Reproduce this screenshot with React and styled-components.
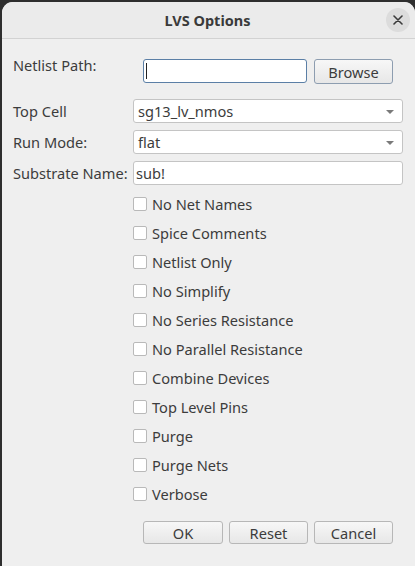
import React from "react";
import styled, { createGlobalStyle } from "styled-components";

const Global = createGlobalStyle`
  html, body {
    margin: 0;
    padding: 0;
    background: #2e2e2e;
  }
  body {
    font-family: "Noto Sans", "DejaVu Sans", sans-serif;
    font-size: 14.6px;
    color: #3c3c3c;
  }
  * { box-sizing: border-box; }
`;

const Window = styled.div`
  margin: 2px 0 0 2px;
  height: 564px;
  background: #efefef;
  border-radius: 11px 11px 0 0;
  overflow: hidden;
  display: flex;
  flex-direction: column;
`;

const TitleBar = styled.div`
  position: relative;
  height: 37px;
  flex: none;
  display: flex;
  align-items: center;
  justify-content: center;
  background: #ebebeb;
  border-bottom: 1px solid #d2d2d2;
`;

const Title = styled.div`
  font-weight: 700;
  font-size: 14.5px;
  color: #3a3a3a;
  margin-right: 2px;
`;

const CloseButton = styled.button`
  position: absolute;
  right: 5px;
  top: 6px;
  width: 24px;
  height: 24px;
  border-radius: 50%;
  border: none;
  padding: 0;
  background: #dcdcdc;
  display: flex;
  align-items: center;
  justify-content: center;
`;

const Body = styled.div`
  padding: 20px 12px 0 11px;
  display: flex;
  flex-direction: column;
`;

const Form = styled.div`
  display: grid;
  grid-template-columns: 120px 1fr;
  row-gap: 7px;
`;

const Label = styled.div`
  display: flex;
  align-items: ${(p) => (p.$top ? "flex-start" : "center")};
  margin-top: ${(p) => (p.$top ? "-3px" : "0")};
  white-space: nowrap;
  line-height: 18px;
`;

const PathRow = styled.div`
  display: flex;
  gap: 7px;
  padding: 0 10px;
  margin-bottom: 8px;
`;

const TextField = styled.div`
  flex: 1;
  height: 24px;
  background: #fff;
  border: 1px solid ${(p) => (p.$focused ? "#5b7fa6" : "#c4c4c4")};
  border-radius: 3px;
  display: flex;
  align-items: center;
  padding-left: ${(p) => (p.$focused ? "2px" : "2px")};
  line-height: 18px;
`;

const Caret = styled.span`
  width: 1px;
  height: 16px;
  background: #222;
`;

const Button = styled.button`
  width: ${(p) => p.$w || 80}px;
  height: ${(p) => p.$h || 24}px;
  font-family: inherit;
  font-size: 14.6px;
  color: #3c3c3c;
  border: 1px solid ${(p) => (p.$blue ? "#8d9db0" : "#b7b7b7")};
  border-radius: 3px;
  background: linear-gradient(#f7f7f7, #e7e7e7);
  padding: 0;
  line-height: 18px;
`;

const Combo = styled.div`
  height: 24px;
  background: #fff;
  border: 1px solid #c4c4c4;
  border-radius: 3px;
  display: flex;
  align-items: center;
  justify-content: space-between;
  padding: 0 8px 0 4px;
  line-height: 18px;
`;

const Arrow = styled.span`
  width: 0;
  height: 0;
  border-left: 4px solid transparent;
  border-right: 4px solid transparent;
  border-top: 4px solid #7a7a7a;
  margin-top: 1px;
`;

const Checks = styled.div`
  display: flex;
  flex-direction: column;
  margin: 4px 0 0 120px;
`;

const CheckRow = styled.label`
  height: 29px;
  display: flex;
  align-items: center;
  gap: 5px;
  line-height: 18px;
`;

const Box = styled.span`
  width: 14px;
  height: 14px;
  flex: none;
  background: #fff;
  border: 1px solid #b9b9b9;
  border-radius: 2px;
`;

const Buttons = styled.div`
  display: flex;
  justify-content: flex-end;
  gap: 6px;
  margin: 13px 10px 0 0;
`;

const options = [
  "No Net Names",
  "Spice Comments",
  "Netlist Only",
  "No Simplify",
  "No Series Resistance",
  "No Parallel Resistance",
  "Combine Devices",
  "Top Level Pins",
  "Purge",
  "Purge Nets",
  "Verbose",
];

export default function App() {
  return (
    <>
      <Global />
      <Window>
        <TitleBar>
          <Title>LVS Options</Title>
          <CloseButton aria-label="Close">
            <svg width="10" height="10" viewBox="0 0 10 10">
              <path d="M1 1 L9 9 M9 1 L1 9" stroke="#3a3a3a" strokeWidth="1.6" strokeLinecap="round" />
            </svg>
          </CloseButton>
        </TitleBar>
        <Body>
          <Form>
            <Label $top>Netlist Path:</Label>
            <PathRow>
              <TextField $focused>
                <Caret />
              </TextField>
              <Button $w={79} $h={25} $blue>Browse</Button>
            </PathRow>

            <Label>Top Cell</Label>
            <Combo>
              <span>sg13_lv_nmos</span>
              <Arrow />
            </Combo>

            <Label>Run Mode:</Label>
            <Combo>
              <span>flat</span>
              <Arrow />
            </Combo>

            <Label>Substrate Name:</Label>
            <TextField>sub!</TextField>
          </Form>

          <Checks>
            {options.map((o) => (
              <CheckRow key={o}>
                <Box />
                {o}
              </CheckRow>
            ))}
          </Checks>

          <Buttons>
            <Button $h={23}>OK</Button>
            <Button $w={79} $h={23}>Reset</Button>
            <Button $w={79} $h={23}>Cancel</Button>
          </Buttons>
        </Body>
      </Window>
    </>
  );
}
